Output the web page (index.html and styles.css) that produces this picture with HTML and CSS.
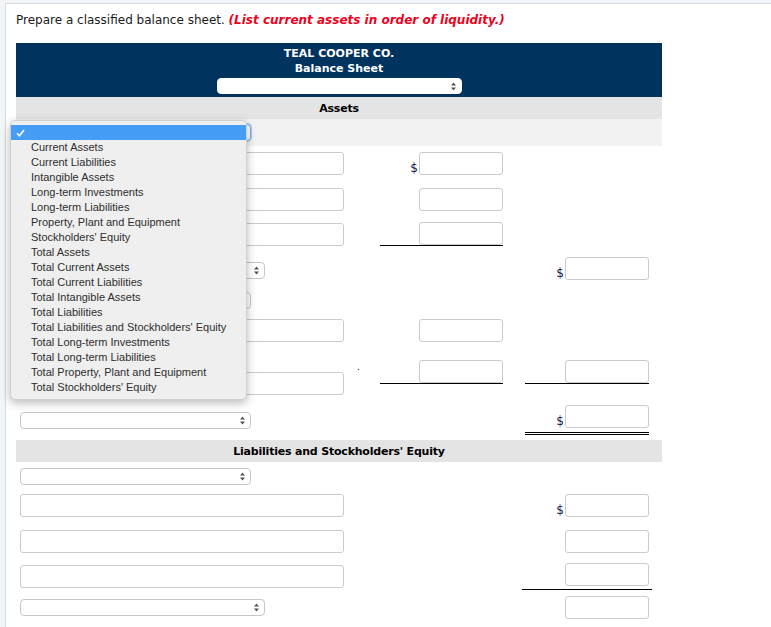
FILE: index.html
```html
<!DOCTYPE html>
<html lang="en">
<head>
    <meta charset="UTF-8">
    <meta name="viewport" content="width=device-width, initial-scale=1.0">
    <title>Balance Sheet</title>
    <link rel="stylesheet" href="styles.css">
</head>
<body>
    <div id="panel">
        <p class="prompt">Prepare a classified balance sheet. <em>(List current assets in order of liquidity.)</em></p>

        <div id="sheet">
            <div class="head">
                <div>TEAL COOPER CO.</div>
                <div>Balance Sheet</div>
                <div class="select date">
                    <svg class="arrows" width="5" height="9" viewBox="0 0 5 9"><path d="M2.5 0.5 5 3.5H0z M0 5.5h5L2.5 8.5z"/></svg>
                </div>
            </div>

            <div class="band">Assets</div>

            <!-- first heading row, its list is open -->
            <div class="row shade">
                <div class="label">
                    <div class="select focus">
                        <svg class="arrows" width="5" height="9" viewBox="0 0 5 9"><path d="M2.5 0.5 5 3.5H0z M0 5.5h5L2.5 8.5z"/></svg>
                    </div>
                </div>
                <ul class="menu">
                    <li class="picked"><svg width="9" height="8" viewBox="0 0 9 8"><path d="M1 4.2 3.4 6.8 8 1" fill="none" stroke="#fff" stroke-width="1.6"/></svg></li>
                    <li>Current Assets</li>
                    <li>Current Liabilities</li>
                    <li>Intangible Assets</li>
                    <li>Long-term Investments</li>
                    <li>Long-term Liabilities</li>
                    <li>Property, Plant and Equipment</li>
                    <li>Stockholders' Equity</li>
                    <li>Total Assets</li>
                    <li>Total Current Assets</li>
                    <li>Total Current Liabilities</li>
                    <li>Total Intangible Assets</li>
                    <li>Total Liabilities</li>
                    <li>Total Liabilities and Stockholders' Equity</li>
                    <li>Total Long-term Investments</li>
                    <li>Total Long-term Liabilities</li>
                    <li>Total Property, Plant and Equipment</li>
                    <li>Total Stockholders' Equity</li>
                </ul>
            </div>

            <div class="row mt6">
                <div class="label"><input type="text" class="name"></div>
                <div class="col"><span class="dollar">$</span><input type="text" class="amt"></div>
            </div>
            <div class="row mt13">
                <div class="label"><input type="text" class="name"></div>
                <div class="col"><input type="text" class="amt"></div>
            </div>
            <div class="row mt11">
                <div class="label"><input type="text" class="name"></div>
                <div class="col under"><input type="text" class="amt"></div>
            </div>
            <div class="row mt11">
                <div class="label low">
                    <div class="select wide">
                        <svg class="arrows" width="5" height="9" viewBox="0 0 5 9"><path d="M2.5 0.5 5 3.5H0z M0 5.5h5L2.5 8.5z"/></svg>
                    </div>
                </div>
                <div class="col"></div>
                <div class="col last"><span class="dollar">$</span><input type="text" class="amt"></div>
            </div>
            <div class="row mt12">
                <div class="label">
                    <div class="select">
                        <svg class="arrows" width="5" height="9" viewBox="0 0 5 9"><path d="M2.5 0.5 5 3.5H0z M0 5.5h5L2.5 8.5z"/></svg>
                    </div>
                </div>
            </div>
            <div class="row mt10">
                <div class="label"><input type="text" class="name"></div>
                <div class="col"><input type="text" class="amt"></div>
            </div>
            <div class="row top mt18">
                <div class="label"><input type="text" class="name drop"><span class="dot">.</span></div>
                <div class="col under"><input type="text" class="amt"></div>
                <div class="col last under"><input type="text" class="amt"></div>
            </div>
            <div class="row mt10">
                <div class="label">
                    <div class="select">
                        <svg class="arrows" width="5" height="9" viewBox="0 0 5 9"><path d="M2.5 0.5 5 3.5H0z M0 5.5h5L2.5 8.5z"/></svg>
                    </div>
                </div>
                <div class="col"></div>
                <div class="col last total"><span class="dollar">$</span><input type="text" class="amt"></div>
            </div>

            <div class="band mt5">Liabilities and Stockholders' Equity</div>

            <div class="row mt6">
                <div class="label">
                    <div class="select">
                        <svg class="arrows" width="5" height="9" viewBox="0 0 5 9"><path d="M2.5 0.5 5 3.5H0z M0 5.5h5L2.5 8.5z"/></svg>
                    </div>
                </div>
            </div>
            <div class="row mt9">
                <div class="label"><input type="text" class="name"></div>
                <div class="col"></div>
                <div class="col last"><span class="dollar">$</span><input type="text" class="amt"></div>
            </div>
            <div class="row mt13">
                <div class="label"><input type="text" class="name"></div>
                <div class="col"></div>
                <div class="col last"><input type="text" class="amt"></div>
            </div>
            <div class="row mt10">
                <div class="label"><input type="text" class="name"></div>
                <div class="col"></div>
                <div class="col last under broad"><input type="text" class="amt"></div>
            </div>
            <div class="row mt6">
                <div class="label">
                    <div class="select wide">
                        <svg class="arrows" width="5" height="9" viewBox="0 0 5 9"><path d="M2.5 0.5 5 3.5H0z M0 5.5h5L2.5 8.5z"/></svg>
                    </div>
                </div>
                <div class="col"></div>
                <div class="col last"><input type="text" class="amt"></div>
            </div>
        </div>
    </div>
</body>
</html>
```

FILE: styles.css
```css
* {
    box-sizing: border-box;
}

body {
    margin: 0;
    background-color: #f3f6f9;
    font-family: 'DejaVu Sans', Verdana, sans-serif;
}

#panel {
    margin: 3px 0 0 5px;
    min-height: 640px;
    padding: 9px 0 20px 10px;
    background-color: #fff;
    border-top: 1px solid #d3dce5;
    border-left: 1px solid #d3dce5;
}

.prompt {
    margin: 0 0 15px;
    font-size: 12px;
    line-height: 15px;
    color: #1a1a1a;
}

.prompt em {
    color: #ee0020;
    font-weight: bold;
}

#sheet {
    width: 646px;
}

.head {
    background-color: #01335f;
    color: #fff;
    font-size: 11px;
    font-weight: bold;
    line-height: 15px;
    text-align: center;
    padding: 3px 0;
}

.band {
    height: 22px;
    line-height: 23px;
    background-color: #e4e4e4;
    font-size: 11px;
    font-weight: bold;
    letter-spacing: -0.2px;
    text-align: center;
    color: #000;
}

/* rows of the sheet */
.row {
    display: flex;
    align-items: center;
}

.row.top {
    align-items: flex-start;
}

.row.shade {
    position: relative;
    height: 27px;
    background-color: #f2f2f2;
}

.label {
    flex: 0 0 364px;
    display: flex;
    align-items: flex-start;
    padding-left: 4px;
}

.label.low {
    padding-top: 4px;
}

.col {
    flex: 0 0 123px;
    display: flex;
    justify-content: flex-end;
    align-items: flex-end;
}

.col.last {
    flex-basis: 124px;
    margin-left: 22px;
}

.col.under {
    border-bottom: 1px solid #000;
}

.col.last.broad {
    flex-basis: 130px;
    margin-left: 19px;
    padding: 0 3px 3px 0;
}

.col.total {
    padding-bottom: 4px;
    border-bottom: 3px double #000;
}

.mt5 { margin-top: 5px; }
.mt6 { margin-top: 6px; }
.mt9 { margin-top: 9px; }
.mt10 { margin-top: 10px; }
.mt11 { margin-top: 11px; }
.mt12 { margin-top: 12px; }
.mt13 { margin-top: 13px; }
.mt18 { margin-top: 18px; }

/* inputs */
input {
    margin: 0;
    height: 23px;
    border: 1px solid #cbcbcb;
    border-radius: 3px;
    background-color: #fff;
    font-family: inherit;
}

input.name {
    width: 324px;
}

input.name.drop {
    margin-top: 12px;
}

input.amt {
    width: 84px;
}

.dollar {
    font-size: 12px;
    line-height: 12px;
    color: #15154d;
    margin-right: 1px;
    padding-bottom: 1px;
}

.dot {
    font-size: 9px;
    line-height: 9px;
    margin: 3px 0 0 13px;
}

/* drop-down boxes */
.select {
    display: flex;
    align-items: center;
    justify-content: flex-end;
    width: 231px;
    height: 17px;
    padding-right: 5px;
    background-color: #fff;
    border: 1px solid #c6c6c6;
    border-radius: 4px;
}

.select.wide {
    width: 245px;
}

.select.date {
    width: 245px;
    height: 16px;
    margin: 2px auto 0;
    border-color: #fff;
}

.select.focus {
    border-color: #79aeea;
    box-shadow: 0 0 0 1px #a8cbf2;
}

.arrows {
    fill: #555;
}

/* open list over the first row */
.menu {
    position: absolute;
    top: 1px;
    left: -6px;
    width: 237px;
    margin: 0;
    padding: 4px 0;
    list-style: none;
    background-color: #efefef;
    border: 1px solid #d0d0d0;
    border-radius: 5px;
    box-shadow: 0 3px 10px rgba(0, 0, 0, 0.28);
    font-family: 'Liberation Sans', Arial, sans-serif;
    font-size: 11px;
    color: #2e2e2e;
}

.menu li {
    height: 15px;
    line-height: 15px;
    padding-left: 20px;
    white-space: nowrap;
}

.menu li.picked {
    display: flex;
    align-items: center;
    padding-left: 5px;
    background-color: #459df5;
}
```
